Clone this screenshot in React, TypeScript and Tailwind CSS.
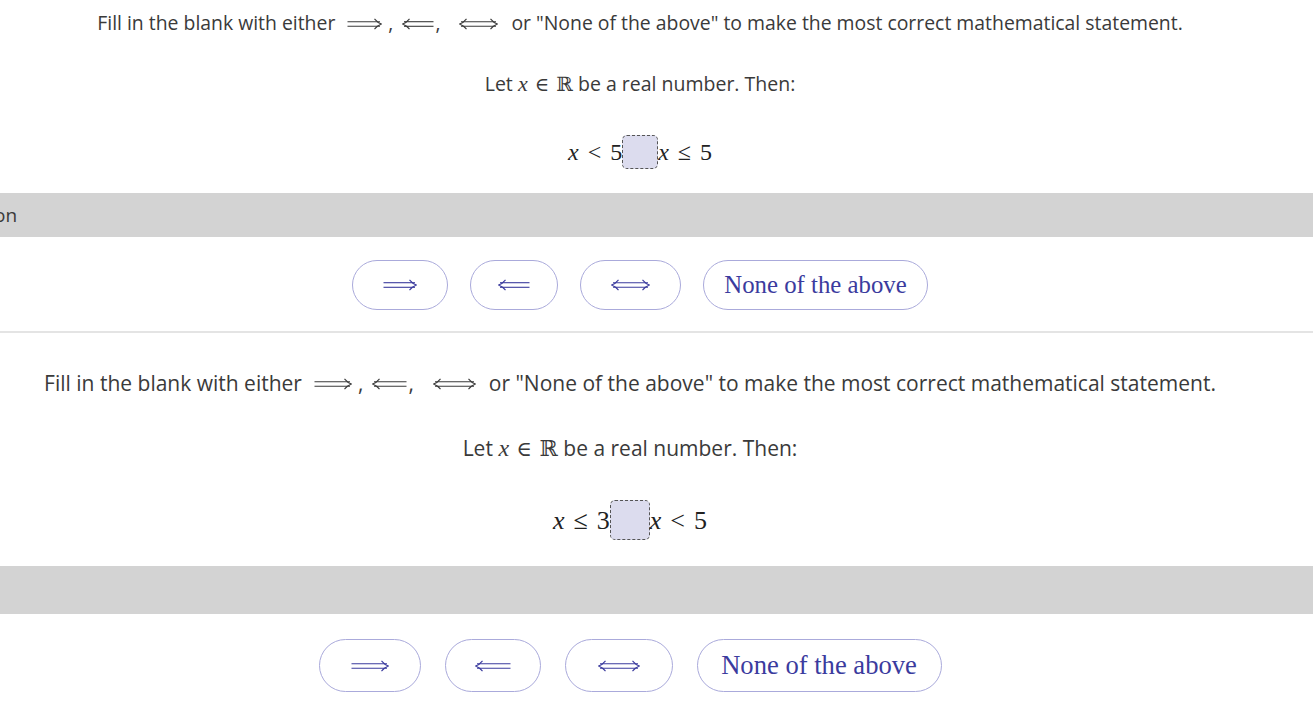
const sans = { fontFamily: '"Open Sans", "Noto Sans", sans-serif' };
const serif = { fontFamily: '"Liberation Serif", "DejaVu Serif", serif' };
const dejavu = { fontFamily: '"DejaVu Serif", "Liberation Serif", serif' };

function Arrow({ kind, w, className = '' }: { kind: 'r' | 'l' | 'lr'; w: number; className?: string }) {
  const h = 12;
  const x0 = kind === 'r' ? 0.5 : 2;
  const x1 = kind === 'l' ? w - 0.5 : w - 2;
  const right = `M${w - 7.5} 0.8 Q${w - 4.5} 4.6 ${w - 0.6} 6 Q${w - 4.5} 7.4 ${w - 7.5} 11.2`;
  const left = `M7.5 0.8 Q4.5 4.6 0.6 6 Q4.5 7.4 7.5 11.2`;
  return (
    <svg
      width={w}
      height={h}
      viewBox={`0 0 ${w} ${h}`}
      className={`inline-block align-middle ${className}`}
      fill="none"
      stroke="currentColor"
      strokeWidth={1.1}
    >
      <line x1={x0} y1={3.7} x2={x1} y2={3.7} />
      <line x1={x0} y1={8.3} x2={x1} y2={8.3} />
      {kind !== 'l' && <path d={right} />}
      {kind !== 'r' && <path d={left} />}
    </svg>
  );
}

function Question({ big }: { big?: boolean }) {
  return (
    <p
      className={`text-center text-[#3a3a3a] ${big ? 'text-[21px] leading-[26px]' : 'text-[19.4px] leading-[24px]'}`}
      style={sans}
    >
      Fill in the blank with either
      <Arrow kind="r" w={big ? 38 : 35} className="ml-[12px] mr-[6px] -mt-[2px]" />,
      <Arrow kind="l" w={big ? 35 : 32} className="ml-[9px] mr-[1px] -mt-[2px]" />,
      <Arrow kind="lr" w={big ? 43 : 39} className="ml-[19px] mr-[13px] -mt-[2px]" />
      or "None of the above" to make the most correct mathematical statement.
    </p>
  );
}

function LetLine({ big }: { big?: boolean }) {
  return (
    <p
      className={`text-center text-[#3a3a3a] ${big ? 'text-[21px] leading-[26px]' : 'text-[19.5px] leading-[24px]'}`}
      style={sans}
    >
      Let{' '}
      <i className={big ? 'text-[24px]' : 'text-[22px]'} style={serif}>
        x
      </i>{' '}
      <span style={serif} className="mx-[2px]">∈</span>{' '}
      <span style={dejavu} className={big ? 'text-[22px]' : 'text-[20px]'}>
        ℝ
      </span>{' '}
      be a real number. Then:
    </p>
  );
}

function MathLine({ big, op, b, op2, c }: { big?: boolean; op: string; b: string; op2: string; c: string }) {
  return (
    <div
      className={`flex items-center justify-center text-[#222] ${big ? 'text-[26px] h-[44px]' : 'text-[24px] h-[40px]'}`}
      style={serif}
    >
      <i>x</i>
      <span className="mx-[9px]">{op}</span>
      <span>{b}</span>
      <span
        className={`inline-block ${big ? 'w-[40px] h-[40px]' : 'w-[36px] h-[34px]'} rounded-[5px] border border-dashed border-[#555] bg-[#dcdcee]`}
      />
      <i>x</i>
      <span className="mx-[9px]">{op2}</span>
      <span>{c}</span>
    </div>
  );
}

function Buttons({ big }: { big?: boolean }) {
  const base = `rounded-full border border-[#aaaadb] bg-white text-[#3b3b9e] flex items-center justify-center ${big ? 'h-[53px]' : 'h-[50px]'}`;
  return (
    <div className={`flex items-center justify-center ${big ? 'gap-[24px]' : 'gap-[22px]'}`} style={serif}>
      <button className={`${base} ${big ? 'w-[102px]' : 'w-[96px]'}`}>
        <Arrow kind="r" w={big ? 38 : 34} />
      </button>
      <button className={`${base} ${big ? 'w-[96px]' : 'w-[88px]'}`}>
        <Arrow kind="l" w={big ? 36 : 32} />
      </button>
      <button className={`${base} ${big ? 'w-[108px]' : 'w-[101px]'}`}>
        <Arrow kind="lr" w={big ? 42 : 39} />
      </button>
      <button className={`${base} ${big ? 'w-[245px] text-[26.6px]' : 'w-[225px] text-[24.8px]'}`}>
        None of the above
      </button>
    </div>
  );
}

export default function App() {
  return (
    <div className="w-[1313px] h-[704px] overflow-hidden bg-white">
      {/* first question */}
      <div className="w-[1280px] pt-[11px]">
        <Question />
        <div className="mt-[37px]">
          <LetLine />
        </div>
        <div className="mt-[35px]">
          <MathLine op="<" b="5" op2="≤" c="5" />
        </div>
      </div>
      <div className="mt-[21px] h-[44px] bg-[#d3d3d3] flex items-center overflow-hidden">
        <span className="-ml-[6px] text-[19px] text-[#3a3a3a]" style={sans}>
          on
        </span>
      </div>
      <div className="w-[1280px] mt-[23px]">
        <Buttons />
      </div>
      <div className="mt-[21px] h-[2px] bg-[#e4e4e4]" />

      {/* second question */}
      <div className="w-[1260px] pt-[37px]">
        <Question big />
        <div className="mt-[39px]">
          <LetLine big />
        </div>
        <div className="mt-[36px]">
          <MathLine big op="≤" b="3" op2="<" c="5" />
        </div>
      </div>
      <div className="mt-[24px] h-[48px] bg-[#d3d3d3]" />
      <div className="w-[1260px] mt-[25px]">
        <Buttons big />
      </div>
    </div>
  );
}
